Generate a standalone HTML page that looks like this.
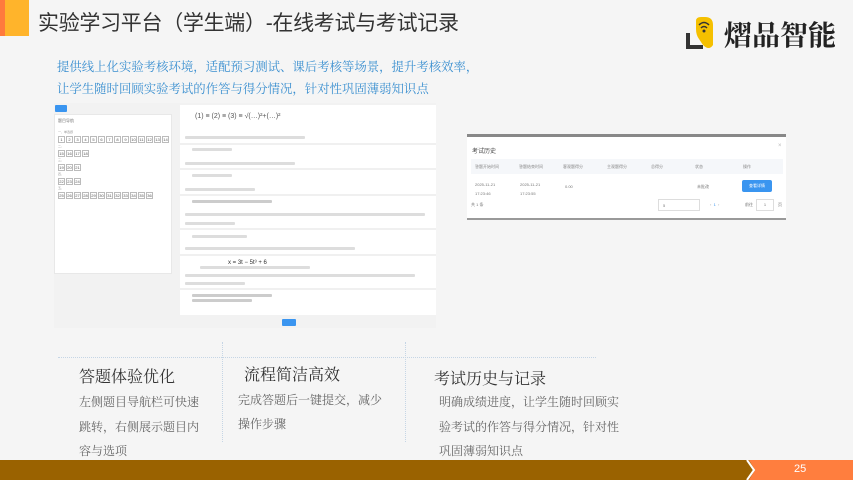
<!DOCTYPE html>
<html><head><meta charset="utf-8"><style>
*{margin:0;padding:0;box-sizing:border-box}
body{width:853px;height:480px;background:#f5f5f5;position:relative;overflow:hidden;font-family:"Liberation Sans","Noto Sans CJK SC",sans-serif}
.a{position:absolute}
.serif{font-family:"Liberation Serif","Noto Serif CJK SC",serif}
.g{background:#ddd;height:3px;border-radius:1px}
.row{display:flex;gap:1px;height:7px;margin-bottom:1px}
.row span{background:#fff;border:1px solid #bbb;font-size:4px;color:#555;width:7px;height:7px;text-align:center;line-height:5px;flex:none}
.lab{font-size:3px;color:#999;height:6px}
</style></head><body>
<div class="a" style="left:0;top:0;width:5px;height:36px;background:#ff7a3d"></div>
<div class="a" style="left:5px;top:0;width:24px;height:36px;background:#ffb42b"></div>
<div class="a" style="left:38px;top:7px;font-size:21px;color:#333;white-space:nowrap;letter-spacing:-0.3px">实验学习平台（学生端）-在线考试与考试记录</div>
<svg class="a" style="left:685px;top:17px" width="34" height="34" viewBox="0 0 34 34">
<path d="M11 4 Q11 0 16 0 L20 0 Q28 0 28 8 L28 28 Q24 34 18 28 L14 22 Q11 18 11 12Z" fill="#f5c000"/>
<path d="M3 16 L3 30 L18 30" stroke="#333" stroke-width="4" fill="none"/>
<path d="M14 8 Q19 3 24 8 M16 11 Q19 8 22 11" stroke="#333" stroke-width="1.5" fill="none"/><circle cx="19" cy="14" r="1.5" fill="#333"/>
</svg>
<div class="a serif" style="left:724px;top:14px;font-size:28px;font-weight:bold;color:#222;white-space:nowrap">熠品智能</div>
<div class="a serif" style="left:57px;top:56px;font-size:12.4px;color:#3a8fd0;line-height:22px;white-space:nowrap">提供线上化实验考核环境，适配预习测试、课后考核等场景，提升考核效率，<br>让学生随时回顾实验考试的作答与得分情况，针对性巩固薄弱知识点</div>

<!-- left screenshot -->
<div class="a" style="left:54px;top:103px;width:382px;height:225px;background:#f2f2f2"></div>
<div class="a" style="left:55px;top:105px;width:12px;height:7px;background:#3a95f0;border-radius:1px"></div>
<div class="a" style="left:54px;top:114px;width:118px;height:160px;background:#fff;border:1px solid #e8e8e8"></div>
<div class="a" style="left:58px;top:118px;font-size:4px;color:#777">题目导航</div>
<div class="a" style="left:58px;top:130px;width:112px">
<div class="lab">一、单选题</div>
<div class="row"><span>1</span><span>2</span><span>3</span><span>4</span><span>5</span><span>6</span><span>7</span><span>8</span><span>9</span><span>10</span><span>11</span><span>12</span><span>13</span><span>14</span></div>
<div class="lab">二、</div>
<div class="row"><span>15</span><span>16</span><span>17</span><span>18</span></div>
<div class="lab">三、</div>
<div class="row"><span>19</span><span>20</span><span>21</span></div>
<div class="lab">四、</div>
<div class="row"><span>22</span><span>23</span><span>24</span></div>
<div class="lab">五、</div>
<div class="row"><span>25</span><span>26</span><span>27</span><span>28</span><span>29</span><span>30</span><span>31</span><span>32</span><span>33</span><span>34</span><span>35</span><span>36</span></div>
</div>
<div class="a" style="left:180px;top:105px;width:256px;height:210px;background:#fff"></div>
<div class="a" style="left:180px;top:143px;width:256px;height:2px;background:#f0f0f0"></div>
<div class="a" style="left:180px;top:168px;width:256px;height:2px;background:#f0f0f0"></div>
<div class="a" style="left:180px;top:194px;width:256px;height:2px;background:#f0f0f0"></div>
<div class="a" style="left:180px;top:228px;width:256px;height:2px;background:#f0f0f0"></div>
<div class="a" style="left:180px;top:254px;width:256px;height:2px;background:#f0f0f0"></div>
<div class="a" style="left:180px;top:288px;width:256px;height:2px;background:#f0f0f0"></div>
<div class="a" style="left:195px;top:113px;font-size:7px;color:#555">(1) ≡ (2) ≡ (3) ≡ √(…)²+(…)²</div>
<div class="a g" style="left:185px;top:136px;width:120px"></div>
<div class="a g" style="left:192px;top:148px;width:40px"></div>
<div class="a g" style="left:185px;top:162px;width:110px"></div>
<div class="a g" style="left:192px;top:174px;width:40px"></div>
<div class="a g" style="left:185px;top:188px;width:70px"></div>
<div class="a g" style="left:192px;top:200px;width:80px;background:#ccc"></div>
<div class="a g" style="left:185px;top:213px;width:240px"></div>
<div class="a g" style="left:185px;top:222px;width:50px"></div>
<div class="a g" style="left:192px;top:235px;width:55px"></div>
<div class="a g" style="left:185px;top:247px;width:170px"></div>
<div class="a" style="left:228px;top:260px;font-size:6px;color:#333">x = 3t − 5t³ + 6</div>
<div class="a g" style="left:200px;top:266px;width:110px"></div>
<div class="a g" style="left:185px;top:274px;width:230px"></div>
<div class="a g" style="left:185px;top:282px;width:60px"></div>
<div class="a g" style="left:192px;top:294px;width:80px;background:#ccc"></div>
<div class="a g" style="left:192px;top:299px;width:60px;background:#ccc"></div>
<div class="a" style="left:282px;top:319px;width:14px;height:7px;background:#3a95f0;border-radius:1px"></div>

<!-- right screenshot -->
<div class="a" style="left:467px;top:134px;width:319px;height:3px;background:#888"></div>
<div class="a" style="left:467px;top:137px;width:319px;height:83px;background:#fff"></div>
<div class="a" style="left:467px;top:218px;width:319px;height:2px;background:#999"></div>
<div class="a" style="left:472px;top:146px;font-size:6px;color:#444">考试历史</div>
<div class="a" style="left:778px;top:143px;font-size:6px;color:#bbb">×</div>
<div class="a" style="left:471px;top:159px;width:312px;height:15px;background:#f5f7fa"></div>
<div class="a" style="left:475px;top:164px;font-size:4px;color:#888;white-space:nowrap"><span style="display:inline-block;width:44px">答题开始时间</span><span style="display:inline-block;width:44px">答题结束时间</span><span style="display:inline-block;width:44px">客观题得分</span><span style="display:inline-block;width:44px">主观题得分</span><span style="display:inline-block;width:44px">总得分</span><span style="display:inline-block;width:48px">状态</span>操作</div>
<div class="a" style="left:475px;top:180px;font-size:4px;color:#777;line-height:9px">2025-11-21<br>17:23:46</div>
<div class="a" style="left:520px;top:180px;font-size:4px;color:#777;line-height:9px">2025-11-21<br>17:23:55</div>
<div class="a" style="left:565px;top:184px;font-size:4px;color:#777">0.00</div>
<div class="a" style="left:697px;top:184px;font-size:4px;color:#777">未批改</div>
<div class="a" style="left:742px;top:180px;width:30px;height:12px;background:#3a95f0;border-radius:2px;font-size:4px;color:#fff;text-align:center;line-height:12px">查看详情</div>
<div class="a" style="left:471px;top:202px;font-size:4px;color:#777">共 1 条</div>
<div class="a" style="left:658px;top:199px;width:42px;height:12px;border:1px solid #ddd;font-size:4px;color:#777;padding:3px 4px">5</div>
<div class="a" style="left:710px;top:202px;font-size:4px;color:#aaa">‹ &nbsp;<span style="color:#3a95f0">1</span>&nbsp; ›</div>
<div class="a" style="left:745px;top:202px;font-size:4px;color:#777">前往</div>
<div class="a" style="left:756px;top:199px;width:18px;height:12px;border:1px solid #ddd;font-size:4px;color:#777;text-align:center;line-height:10px">1</div>
<div class="a" style="left:778px;top:202px;font-size:4px;color:#777">页</div>

<!-- features -->
<div class="a" style="left:58px;top:357px;width:538px;border-top:1px dotted #c5d5e5"></div>
<div class="a" style="left:222px;top:342px;height:100px;border-left:1px dotted #c5d5e5"></div>
<div class="a" style="left:405px;top:342px;height:100px;border-left:1px dotted #c5d5e5"></div>
<div class="a serif" style="left:79px;top:364px;font-size:16px;color:#333;white-space:nowrap">答题体验优化</div>
<div class="a serif" style="left:244px;top:362px;font-size:16px;color:#333;white-space:nowrap">流程简洁高效</div>
<div class="a serif" style="left:434px;top:366px;font-size:16px;color:#333;white-space:nowrap">考试历史与记录</div>
<div class="a serif" style="left:79px;top:390px;font-size:12px;color:#666;line-height:24.5px;width:130px">左侧题目导航栏可快速跳转，右侧展示题目内容与选项</div>
<div class="a serif" style="left:238px;top:388px;font-size:12px;color:#666;line-height:24px;width:155px">完成答题后一键提交，减少操作步骤</div>
<div class="a serif" style="left:439px;top:390px;font-size:12px;color:#666;line-height:24.5px;width:190px">明确成绩进度，让学生随时回顾实验考试的作答与得分情况，针对性巩固薄弱知识点</div>

<!-- bottom bar -->
<div class="a" style="left:0;top:460px;width:853px;height:20px;background:#9a6200"></div>
<svg class="a" style="left:745px;top:460px" width="108" height="20"><polygon points="4,0 108,0 108,20 4,20 10,10" fill="#ff7e3e"/><polyline points="2,0 9,10 2,20" stroke="#fff" stroke-width="2" fill="none"/></svg>
<div class="a" style="left:794px;top:463px;font-size:11px;color:#fff">25</div>
</body></html>
